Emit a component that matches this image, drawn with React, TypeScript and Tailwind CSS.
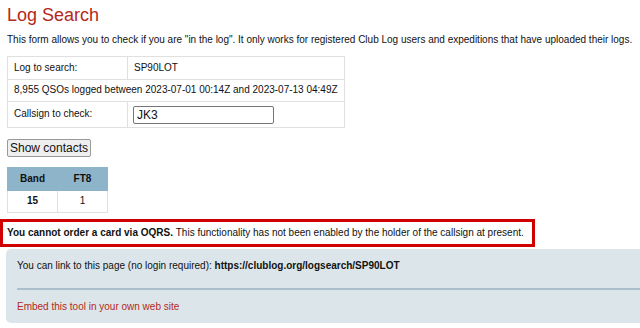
export default function App() {
  return (
    <div className="min-h-[328px] bg-white text-[10px] leading-tight text-[#111]" style={{ fontFamily: '"Liberation Sans", Arial, sans-serif' }}>
      <div className="px-[7px] pt-[5px]">
        <h1 className="text-[18px] leading-[20px] text-[#b5281c]">Log Search</h1>
        <p className="mt-[8px] leading-[13px] whitespace-nowrap">
          This form allows you to check if you are "in the log". It only works for registered Club Log users and expeditions that have uploaded their logs.
        </p>

        <table className="mt-[10px] w-[332px] border-collapse">
          <tbody>
            <tr className="h-[23px]">
              <td className="w-[120px] border border-[#e0e0e0] px-[6px]">Log to search:</td>
              <td className="border border-[#e0e0e0] px-[6px]">SP90LOT</td>
            </tr>
            <tr className="h-[22px]">
              <td colSpan={2} className="border border-[#e0e0e0] px-[6px] whitespace-nowrap">
                8,955 QSOs logged between 2023-07-01 00:14Z and 2023-07-13 04:49Z
              </td>
            </tr>
            <tr className="h-[26px]">
              <td className="border border-[#e0e0e0] px-[6px]">Callsign to check:</td>
              <td className="border border-[#e0e0e0] px-[5px]">
                <input
                  defaultValue="JK3"
                  className="block h-[18px] w-[141px] border border-[#767676] rounded-[2px] px-[3px] text-[12px] outline-none"
                  style={{ fontFamily: '"Liberation Sans", Arial, sans-serif' }}
                />
              </td>
            </tr>
          </tbody>
        </table>

        <button
          className="mt-[11px] block h-[18px] w-[84px] rounded-[2px] border border-[#999] bg-[#efefef] text-[12px] leading-none text-[#111]"
          style={{ fontFamily: '"Liberation Sans", Arial, sans-serif' }}
        >
          Show contacts
        </button>

        <table className="mt-[10px] w-[101px] border-collapse text-center">
          <thead>
            <tr className="h-[23px] bg-[#8db4c9]">
              <th className="w-[50px] border border-[#8db4c9] font-bold">Band</th>
              <th className="border border-[#8db4c9] border-l-[#b9d0dc] font-bold">FT8</th>
            </tr>
          </thead>
          <tbody>
            <tr className="h-[22px]">
              <td className="border border-[#e0e0e0] font-bold">15</td>
              <td className="border border-[#e0e0e0]">1</td>
            </tr>
          </tbody>
        </table>
      </div>

      <div className="mt-[6px] flex h-[28px] w-[535px] items-center border-[3px] border-[#d00000] px-[4px] whitespace-nowrap">
        <span className="font-bold">You cannot order a card via OQRS.</span>
        <span>&nbsp;This functionality has not been enabled by the holder of the callsign at present.</span>
      </div>

      <div className="ml-[6px] mt-[2px] h-[74px] rounded-l-[5px] bg-[#dce6ea] pl-[11px] pt-[11px]">
        <div>
          You can link to this page (no login required): <span className="font-bold">https://clublog.org/logsearch/SP90LOT</span>
        </div>
        <div className="mt-[15px] h-[2px] bg-[#a9bfcb]"></div>
        <div className="mt-[11px] text-[#b5281c]">Embed this tool in your own web site</div>
      </div>
    </div>
  );
}
